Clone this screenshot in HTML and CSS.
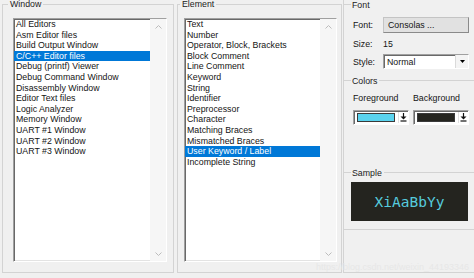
FILE: index.html
```html
<!DOCTYPE html>
<html lang="en">
<head>
  <meta charset="UTF-8">
  <title>Colors &amp; Fonts</title>
  <link rel="stylesheet" href="styles.css">
</head>
<body>

  <div class="dialog">

    <fieldset class="group group-window">
      <legend>Window</legend>
      <div class="listbox">
        <ul class="items">
          <li>All Editors</li>
          <li>Asm Editor files</li>
          <li>Build Output Window</li>
          <li class="sel">C/C++ Editor files</li>
          <li>Debug (printf) Viewer</li>
          <li>Debug Command Window</li>
          <li>Disassembly Window</li>
          <li>Editor Text files</li>
          <li>Logic Analyzer</li>
          <li>Memory Window</li>
          <li>UART #1 Window</li>
          <li>UART #2 Window</li>
          <li>UART #3 Window</li>
        </ul>
        <div class="scroll">
          <svg width="7" height="4" viewBox="0 0 7 4"><path d="M0.5 3.5 L3.5 0.5 L6.5 3.5"/></svg>
          <svg width="7" height="4" viewBox="0 0 7 4"><path d="M0.5 0.5 L3.5 3.5 L6.5 0.5"/></svg>
        </div>
      </div>
    </fieldset>

    <fieldset class="group group-element">
      <legend>Element</legend>
      <div class="listbox">
        <ul class="items">
          <li>Text</li>
          <li>Number</li>
          <li>Operator, Block, Brackets</li>
          <li>Block Comment</li>
          <li>Line Comment</li>
          <li>Keyword</li>
          <li>String</li>
          <li>Identifier</li>
          <li>Preprocessor</li>
          <li>Character</li>
          <li>Matching Braces</li>
          <li>Mismatched Braces</li>
          <li class="sel">User Keyword / Label</li>
          <li>Incomplete String</li>
        </ul>
        <div class="scroll">
          <svg width="7" height="4" viewBox="0 0 7 4"><path d="M0.5 3.5 L3.5 0.5 L6.5 3.5"/></svg>
          <svg width="7" height="4" viewBox="0 0 7 4"><path d="M0.5 0.5 L3.5 3.5 L6.5 0.5"/></svg>
        </div>
      </div>
    </fieldset>

    <div class="side">
      <div class="font-box">
        <div class="caption caption-top">Font</div>

        <div class="field-row row-font">
          <span>Font:</span>
          <button class="btn">Consolas ...</button>
        </div>
        <div class="field-row row-size">
          <span>Size:</span>
          <span>15</span>
        </div>
        <div class="field-row row-style">
          <span>Style:</span>
          <div class="combo">
            <span>Normal</span>
            <span class="drop">
              <svg width="5" height="3" viewBox="0 0 5 3"><path d="M0 0 H5 L2.5 3 Z"/></svg>
            </span>
          </div>
        </div>

        <div class="caption caption-colors">Colors</div>
        <div class="color-labels">
          <span class="fg-label">Foreground</span>
          <span>Background</span>
        </div>
        <div class="color-row">
          <div class="color-pick">
            <span class="swatch swatch-fg"></span>
            <span class="pick-btn">
              <svg width="7" height="9" viewBox="0 0 7 9"><path d="M3.5 0 V4"/><path class="fill" d="M0.5 3.5 H6.5 L3.5 6.5 Z"/><path d="M0.5 8 H6.5"/></svg>
            </span>
          </div>
          <div class="color-pick">
            <span class="swatch swatch-bg"></span>
            <span class="pick-btn">
              <svg width="7" height="9" viewBox="0 0 7 9"><path d="M3.5 0 V4"/><path class="fill" d="M0.5 3.5 H6.5 L3.5 6.5 Z"/><path d="M0.5 8 H6.5"/></svg>
            </span>
          </div>
        </div>

        <div class="caption caption-sample">Sample</div>
        <div class="sample">XiAaBbYy</div>
      </div>
    </div>

    <div class="watermark">https://blog.csdn.net/weixin_44193346</div>
  </div>

</body>
</html>
```

FILE: styles.css
```css
:root {
  --bg-color: #f0f0f0;
  --line: #d3d3d3;
  --text-color: #141414;
  --select: #0078d7;
}

body {
  margin: 0;
  background-color: var(--bg-color);
  color: var(--text-color);
  font-family: "Liberation Sans", Arial, sans-serif;
  font-size: 8.8px;
  overflow: hidden;
}

.dialog {
  position: relative;
  display: flex;
  align-items: flex-start;
  width: 474px;
  height: 278px;
  padding-left: 2px;
  box-sizing: border-box;
}

/* group boxes */
.group {
  margin: 0;
  height: 273px;
  box-sizing: border-box;
  border: 1px solid var(--line);
  padding: 0;
  min-width: 0;
}

.group legend {
  padding: 0 2px;
  line-height: 9px;
  color: #222;
}

.group-window {
  width: 172px;
  padding-left: 5px;
}

.group-element {
  width: 165px;
  margin-left: 3px;
  padding-left: 2px;
}

.listbox {
  display: flex;
  height: 244px;
  margin-top: 9px;
  box-sizing: border-box;
  background: #fff;
  border: 1px solid;
  border-color: #a0a0a0 #fff #fff #a0a0a0;
  box-shadow: inset 1px 1px 0 #696969, inset -1px -1px 0 #e3e3e3;
}

.group-window .listbox {
  width: 154px;
  margin-left: 5px;
}

.group-element .listbox {
  width: 153px;
  margin-left: 4px;
}

.items {
  flex: 1;
  list-style: none;
  margin: 0;
  padding: 0;
}

.items li {
  height: 10.6px;
  line-height: 10.6px;
  padding-left: 2px;
  white-space: nowrap;
}

.items li.sel {
  background: var(--select);
  color: #fff;
}

.scroll {
  width: 16px;
  background: #f6f6f6;
  display: flex;
  flex-direction: column;
  justify-content: space-between;
  align-items: center;
  padding: 6px 0 5px;
}

.scroll svg path {
  fill: none;
  stroke: #bcbcbc;
  stroke-width: 1;
}

/* right column */
.side {
  width: 131px;
  height: 273px;
  margin-left: 1px;
  box-sizing: border-box;
  border-left: 1px solid var(--line);
  border-bottom: 1px solid var(--line);
}

.font-box {
  height: 230px;
  box-sizing: border-box;
  border-bottom: 1px solid var(--line);
}

.caption {
  display: flex;
  align-items: center;
  height: 9px;
  color: #222;
}

.caption::before {
  content: "";
  width: 7px;
  border-top: 1px solid var(--line);
  margin-right: 1px;
}

.caption::after {
  content: "";
  flex: 1;
  border-top: 1px solid var(--line);
  margin-left: 2px;
}

.caption-top::after {
  border-top-color: transparent;
}

.field-row {
  display: grid;
  grid-template-columns: 30px 86px;
  align-items: center;
  margin-left: 9px;
}

.row-font {
  margin-top: 8px;
  height: 16px;
}

.row-size {
  height: 21px;
}

.row-style {
  height: 15px;
}

.btn {
  font: inherit;
  color: var(--text-color);
  height: 16px;
  margin: 0;
  padding: 0 0 0 4px;
  text-align: left;
  background: #e1e1e1;
  border: 1px solid;
  border-color: #c4c4c4 #8a8a8a #8a8a8a #c4c4c4;
}

.combo {
  display: flex;
  align-items: center;
  height: 15px;
  box-sizing: border-box;
  background: #fff;
  border: 1px solid;
  border-color: #a0a0a0 #fff #fff #a0a0a0;
  box-shadow: inset 1px 1px 0 #696969;
  padding-left: 3px;
}

.drop {
  margin-left: auto;
  width: 12px;
  height: 13px;
  display: flex;
  align-items: center;
  justify-content: center;
  background: #f4f4f4;
  border-left: 1px solid #dadada;
}

.drop svg path {
  fill: #000;
}

.caption-colors {
  margin-top: 7px;
}

.color-labels {
  display: flex;
  margin: 8px 0 0 9px;
  height: 10px;
  line-height: 10px;
}

.fg-label {
  width: 60px;
}

.color-row {
  display: flex;
  gap: 4px;
  margin: 7px 0 0 9px;
}

.color-pick {
  display: flex;
  align-items: center;
  width: 56px;
  height: 15px;
  box-sizing: border-box;
  background: #fff;
  border: 1px solid;
  border-color: #a0a0a0 #fff #fff #a0a0a0;
  box-shadow: inset 1px 1px 0 #696969;
  padding-left: 3px;
}

.swatch {
  width: 38px;
  height: 9px;
  box-sizing: border-box;
  border: 1px solid #3a3a3a;
}

.swatch-fg {
  background: #5ad3ee;
}

.swatch-bg {
  background: #252520;
}

.pick-btn {
  margin-left: 3px;
  width: 9px;
  height: 11px;
  display: flex;
  align-items: center;
  justify-content: center;
  border-left: 1px solid #e0e0e0;
}

.pick-btn svg path {
  fill: none;
  stroke: #111;
  stroke-width: 1.2;
}

.pick-btn svg path.fill {
  fill: #111;
  stroke: none;
}

.caption-sample {
  margin-top: 43px;
}

.sample {
  width: 117px;
  height: 39px;
  margin: 5px 0 0 7px;
  background: #24241f;
  color: #56cbdd;
  font-family: "DejaVu Sans Mono", monospace;
  font-size: 14.5px;
  display: flex;
  align-items: center;
  justify-content: center;
}

.watermark {
  position: absolute;
  right: 5px;
  bottom: 6px;
  font-size: 9px;
  color: #e7e7e7;
  pointer-events: none;
}
```
